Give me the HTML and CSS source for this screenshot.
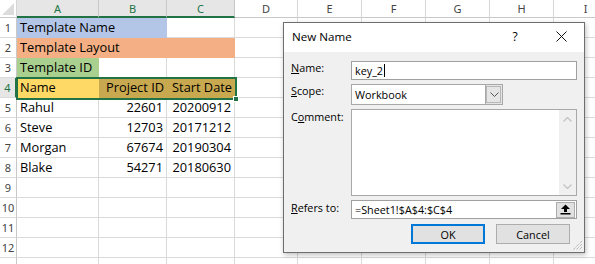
FILE: index.html
```html
<!DOCTYPE html>
<html lang="en">
<head>
  <meta charset="UTF-8" />
  <title>New Name</title>
  <link rel="stylesheet" href="styles.css">
</head>
<body>

  <div class="sheet-wrap">
    <div class="sheet">
      <!-- column headers -->
      <div class="corner">
        <svg width="17" height="18" viewBox="0 0 17 18"><polygon points="14,3 14,15 2,15" fill="#dcdcdc"/></svg>
      </div>
      <div class="ch sel">A</div>
      <div class="ch sel">B</div>
      <div class="ch sel">C</div>
      <div class="ch">D</div>
      <div class="ch">E</div>
      <div class="ch">F</div>
      <div class="ch">G</div>
      <div class="ch">H</div>
      <div class="ch">I</div>

      <!-- row 1 -->
      <div class="rh">1</div>
      <div class="c fill blue span2">Template Name</div>
      <div class="c"></div><div class="c"></div><div class="c"></div><div class="c"></div><div class="c"></div><div class="c"></div><div class="c"></div>

      <!-- row 2 -->
      <div class="rh">2</div>
      <div class="c fill orange span3">Template Layout</div>
      <div class="c"></div><div class="c"></div><div class="c"></div><div class="c"></div><div class="c"></div><div class="c"></div>

      <!-- row 3 -->
      <div class="rh">3</div>
      <div class="c fill green">Template ID</div>
      <div class="c"></div><div class="c"></div><div class="c"></div><div class="c"></div><div class="c"></div><div class="c"></div><div class="c"></div><div class="c"></div>

      <!-- row 4 -->
      <div class="rh sel">4</div>
      <div class="c fill yellow">Name</div>
      <div class="c fill gold span2 head2"><span>Project ID</span><span>Start Date</span></div>
      <div class="c"></div><div class="c"></div><div class="c"></div><div class="c"></div><div class="c"></div><div class="c"></div>

      <!-- data rows -->
      <div class="rh">5</div>
      <div class="c">Rahul</div><div class="c num">22601</div><div class="c num">20200912</div>
      <div class="c"></div><div class="c"></div><div class="c"></div><div class="c"></div><div class="c"></div><div class="c"></div>

      <div class="rh">6</div>
      <div class="c">Steve</div><div class="c num">12703</div><div class="c num">20171212</div>
      <div class="c"></div><div class="c"></div><div class="c"></div><div class="c"></div><div class="c"></div><div class="c"></div>

      <div class="rh">7</div>
      <div class="c">Morgan</div><div class="c num">67674</div><div class="c num">20190304</div>
      <div class="c"></div><div class="c"></div><div class="c"></div><div class="c"></div><div class="c"></div><div class="c"></div>

      <div class="rh">8</div>
      <div class="c">Blake</div><div class="c num">54271</div><div class="c num">20180630</div>
      <div class="c"></div><div class="c"></div><div class="c"></div><div class="c"></div><div class="c"></div><div class="c"></div>

      <div class="rh">9</div>
      <div class="c"></div><div class="c"></div><div class="c"></div><div class="c"></div><div class="c"></div><div class="c"></div><div class="c"></div><div class="c"></div><div class="c"></div>

      <div class="rh">10</div>
      <div class="c"></div><div class="c"></div><div class="c"></div><div class="c"></div><div class="c"></div><div class="c"></div><div class="c"></div><div class="c"></div><div class="c"></div>

      <div class="rh">11</div>
      <div class="c"></div><div class="c"></div><div class="c"></div><div class="c"></div><div class="c"></div><div class="c"></div><div class="c"></div><div class="c"></div><div class="c"></div>

      <div class="rh">12</div>
      <div class="c"></div><div class="c"></div><div class="c"></div><div class="c"></div><div class="c"></div><div class="c"></div><div class="c"></div><div class="c"></div><div class="c"></div>

      <!-- row 13, only its top edge is in view -->
      <div class="rh"></div>
      <div class="c"></div><div class="c"></div><div class="c"></div><div class="c"></div><div class="c"></div><div class="c"></div><div class="c"></div><div class="c"></div><div class="c"></div>
    </div>

    <!-- selection A4:C4 -->
    <div class="selection"><span class="handle"></span></div>

    <!-- New Name dialog -->
    <div class="dialog">
      <div class="titlebar">
        <span class="title">New Name</span>
        <span class="help">?</span>
        <span class="close">
          <svg width="11" height="11" viewBox="0 0 11 11"><path d="M0.5 0.5 L10.5 10.5 M10.5 0.5 L0.5 10.5" stroke="#111" stroke-width="1"/></svg>
        </span>
      </div>

      <div class="dlg-body">
        <div class="form">
          <label class="lbl lbl-name"><u>N</u>ame:</label>
          <div class="field">key_2<span class="caret"></span></div>

          <label class="lbl lbl-scope"><u>S</u>cope:</label>
          <div class="select-row">
            <div class="select">
              <span>Workbook</span>
              <span class="drop">
                <svg width="9" height="5" viewBox="0 0 9 5"><path d="M0.5 0.5 L4.5 4.5 L8.5 0.5" fill="none" stroke="#555" stroke-width="1"/></svg>
              </span>
            </div>
          </div>

          <label class="lbl lbl-comment">C<u>o</u>mment:</label>
          <div class="textarea">
            <div class="scrollbar">
              <svg width="9" height="5" viewBox="0 0 9 5"><path d="M0.5 4.5 L4.5 0.5 L8.5 4.5" fill="none" stroke="#c2c2c2" stroke-width="1.2"/></svg>
              <svg width="9" height="5" viewBox="0 0 9 5"><path d="M0.5 0.5 L4.5 4.5 L8.5 0.5" fill="none" stroke="#c2c2c2" stroke-width="1.2"/></svg>
            </div>
          </div>

          <label class="lbl lbl-refers"><u>R</u>efers to:</label>
          <div class="field refers">
            <span>=Sheet1!$A$4:$C$4</span>
            <span class="pick">
              <svg width="11" height="11" viewBox="0 0 11 11">
                <polygon points="5.5,0.5 10,5 1,5" fill="#000"/>
                <rect x="4" y="5" width="3" height="3" fill="#000"/>
                <rect x="0.5" y="9" width="10" height="1.5" fill="#000"/>
              </svg>
            </span>
          </div>
        </div>

        <div class="buttons">
          <button class="btn btn-ok">OK</button>
          <button class="btn">Cancel</button>
        </div>
      </div>

      <svg class="grip" width="10" height="10" viewBox="0 0 10 10">
        <path d="M9 3 L3 9 M9 6 L6 9 M9 0 L0 9" stroke="#a0a0a0" stroke-width="1" stroke-dasharray="1 1"/>
      </svg>
    </div>
  </div>

</body>
</html>
```

FILE: styles.css
```css
* {
  margin: 0;
  padding: 0;
  box-sizing: border-box;
}

html, body {
  height: 100%;
  background: #fff;
  overflow: hidden;
}

.sheet-wrap {
  position: relative;
  width: 595px;
  height: 264px;
  overflow: hidden;
}

/* ---------- spreadsheet grid ---------- */

.sheet {
  display: grid;
  grid-template-columns: 17px 82px 68px 68px 63px 64px 64px 64px 64px 64px;
  grid-template-rows: 18px;
  grid-auto-rows: 20px;
  font-family: 'Open Sans', sans-serif;
  font-size: 12.8px;
  color: #000;
}

.corner,
.ch,
.rh {
  font-family: 'Noto Sans', sans-serif;
  font-size: 11px;
  color: #444;
  background: #fff;
  border-right: 1px solid #d6d6d6;
  border-bottom: 1px solid #c8c8c8;
}

.ch {
  display: flex;
  align-items: center;
  justify-content: center;
}

.rh {
  display: flex;
  align-items: center;
  justify-content: center;
  border-bottom-color: #dadada;
  border-right-color: #c8c8c8;
}

.ch.sel {
  color: #217346;
  background: #e6e6e6;
  border-bottom: 2px solid #217346;
  border-right-color: #c8c8c8;
}

.rh.sel {
  color: #217346;
  background: #e6e6e6;
  border-right: 2px solid #217346;
}

.c {
  border-right: 1px solid #dadada;
  border-bottom: 1px solid #dadada;
  padding: 0 3px;
  line-height: 19px;
  white-space: nowrap;
  overflow: visible;
}

.c.num {
  text-align: right;
}

.fill {
  border-color: transparent;
}

.span2 { grid-column: span 2; }
.span3 { grid-column: span 3; }

.blue   { background: #b4c6e7; }
.orange { background: #f4b084; }
.green  { background: #a9d08e; }
.yellow { background: #ffd966; }
.gold   { background: #c9a94f; }

.head2 {
  display: grid;
  grid-template-columns: 68px 68px;
  padding: 0;
}

.head2 span {
  text-align: right;
  padding-right: 3px;
}

/* selection outline around A4:C4 */
.selection {
  position: absolute;
  left: 16px;
  top: 77px;
  width: 221px;
  height: 23px;
  border: 2px solid #217346;
}

.handle {
  position: absolute;
  right: -4px;
  bottom: -4px;
  width: 6px;
  height: 6px;
  background: #217346;
  border: 1px solid #fff;
}

/* ---------- dialog ---------- */

.dialog {
  position: absolute;
  left: 283px;
  top: 22px;
  width: 302px;
  height: 231px;
  border: 1px solid #6e6e6e;
  background: #f0f0f0;
  box-shadow: 1px 2px 5px rgba(0, 0, 0, 0.25);
  font-family: 'Open Sans', sans-serif;
  font-size: 10.8px;
  color: #000;
}

.titlebar {
  height: 29px;
  background: #fff;
  display: flex;
  align-items: center;
  padding-left: 8px;
  padding-bottom: 2px;
}

.title {
  font-size: 11.6px;
  flex: 1;
}

.help {
  font-size: 12px;
  width: 46px;
  text-align: center;
}

.close {
  width: 46px;
  display: flex;
  justify-content: center;
}

.dlg-body {
  padding: 9px 7px 0 7px;
}

.form {
  display: grid;
  grid-template-columns: 60px 226px;
  grid-template-rows: 19px 21px 87px 19px;
  row-gap: 4px;
}

.lbl {
  line-height: 14px;
}

.lbl-comment { padding-top: 1px; }
.lbl-refers { padding-top: 1px; }

.field {
  border: 1px solid #a0a0a0;
  background: #fff;
  padding-left: 3px;
  line-height: 17px;
  display: flex;
  align-items: center;
}

.caret {
  display: inline-block;
  width: 1px;
  height: 13px;
  background: #000;
  margin-left: 1px;
}

.select-row {
  display: flex;
}

.select {
  width: 152px;
  height: 21px;
  border: 1px solid #a8a8a8;
  background: #fff;
  display: flex;
  align-items: center;
  padding-left: 3px;
}

.select span:first-child {
  flex: 1;
}

.drop {
  width: 17px;
  height: 19px;
  background: #e5e5e5;
  border-left: 1px solid #a8a8a8;
  display: flex;
  align-items: center;
  justify-content: center;
  outline: 1px solid #b8b8b8;
  outline-offset: -2px;
}

.textarea {
  border: 1px solid #a8a8a8;
  background: #fff;
  display: flex;
  justify-content: flex-end;
}

.scrollbar {
  width: 17px;
  background: #f0f0f0;
  display: flex;
  flex-direction: column;
  justify-content: space-between;
  align-items: center;
  padding: 7px 0 6px;
}

.refers {
  justify-content: space-between;
  padding-right: 1px;
}

.pick {
  width: 19px;
  height: 16px;
  background: #e1e1e1;
  border: 1px solid #adadad;
  display: flex;
  align-items: center;
  justify-content: center;
}

.buttons {
  display: flex;
  justify-content: flex-end;
  gap: 11px;
  margin-top: 5px;
  padding-right: 7px;
}

.btn {
  width: 74px;
  height: 20px;
  background: #e1e1e1;
  border: 1px solid #adadad;
  font-family: 'Open Sans', sans-serif;
  font-size: 10.8px;
  color: #000;
}

.btn-ok {
  border: 2px solid #0078d7;
}

.grip {
  position: absolute;
  right: 1px;
  bottom: 1px;
}
```
